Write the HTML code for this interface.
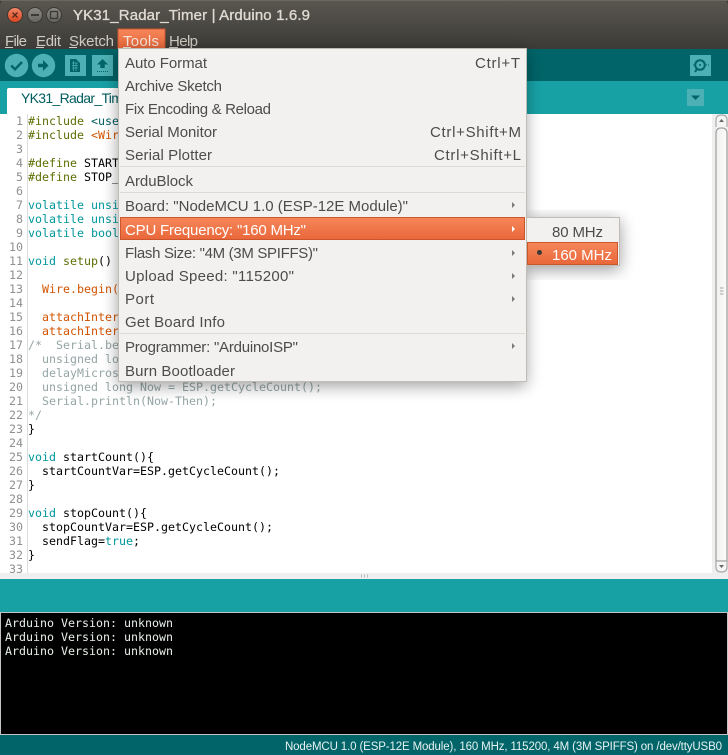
<!DOCTYPE html>
<html><head><meta charset="utf-8"><title>YK31_Radar_Timer | Arduino 1.6.9</title>
<style>
html,body{margin:0;padding:0;background:#3c3b37;width:728px;height:755px;overflow:hidden}
svg{display:block}
.c{font-family:"DejaVu Sans Mono","Liberation Mono",monospace;font-size:11.63px}
.n{fill:#8f8f8f;text-anchor:end}
.k{fill:#00979c}.o{fill:#5e6d03}.r{fill:#d35400}.g{fill:#95a5a6}.b{fill:#000}.t{fill:#005c5f}
.m{font-family:"Liberation Sans",sans-serif;font-size:15px;fill:#4c4c4c}
.w{fill:#fff}
.bar{font-family:"Liberation Sans",sans-serif;font-size:15px;fill:#cfcbc3}
</style></head><body>
<svg width="728" height="755" viewBox="0 0 728 755" xmlns="http://www.w3.org/2000/svg">
<defs>
<linearGradient id="tb" x1="0" y1="0" x2="0" y2="1"><stop offset="0" stop-color="#5a5750"/><stop offset=".45" stop-color="#4c4a44"/><stop offset="1" stop-color="#3c3b37"/></linearGradient>
<linearGradient id="hl" x1="0" y1="0" x2="0" y2="1"><stop offset="0" stop-color="#f5875a"/><stop offset="1" stop-color="#e9673a"/></linearGradient>
<linearGradient id="cl" x1="0" y1="0" x2="0" y2="1"><stop offset="0" stop-color="#f2896a"/><stop offset="1" stop-color="#d9431e"/></linearGradient>
<linearGradient id="btn" x1="0" y1="0" x2="0" y2="1"><stop offset="0" stop-color="#8d8b85"/><stop offset="1" stop-color="#65635d"/></linearGradient>
<linearGradient id="th" x1="0" y1="0" x2="1" y2="0"><stop offset="0" stop-color="#f2f1ef"/><stop offset="1" stop-color="#fbfbfa"/></linearGradient>
<filter id="sh" x="-20%" y="-20%" width="140%" height="140%"><feGaussianBlur stdDeviation="8"/></filter>
</defs>

<!-- window chrome -->
<rect width="728" height="755" fill="#3c3b37"/>
<path d="M0 49V6Q0 0 6 0H722Q728 0 728 6V49Z" fill="url(#tb)"/>
<rect y="0" width="728" height="1" fill="#6a675f"/>
<circle cx="15" cy="15" r="7.500" fill="url(#cl)" stroke="#3a3833"/>
<path d="M12.500 12.500l5 5M17.500 12.500l-5 5" stroke="#5a2a18" stroke-width="1.400"/>
<circle cx="35" cy="15" r="7.500" fill="url(#btn)" stroke="#3a3833"/>
<rect x="31" y="14" width="8" height="2" fill="#3c3b37"/>
<circle cx="54" cy="15" r="7.500" fill="url(#btn)" stroke="#3a3833"/>
<rect x="50.500" y="11.500" width="7" height="7" fill="none" stroke="#3c3b37" stroke-width="1.400"/>
<text x="73" y="20" font-family="'Liberation Sans',sans-serif" font-size="15" fill="#dfdbd2" stroke="#dfdbd2" stroke-width=".35" textLength="237" lengthAdjust="spacing">YK31_Radar_Timer | Arduino 1.6.9</text>

<!-- menu bar -->
<rect x="118" y="29" width="47" height="19.500" fill="url(#hl)" stroke="#c9562d"/>
<text class="bar" x="5" y="46" textLength="22">File</text>
<rect x="5" y="47" width="8" height="1" fill="#cfcbc3"/>
<text class="bar" x="36" y="46" textLength="25">Edit</text>
<rect x="36" y="47" width="8" height="1" fill="#cfcbc3"/>
<text class="bar" x="69" y="46" textLength="45">Sketch</text>
<rect x="69" y="47" width="8" height="1" fill="#cfcbc3"/>
<text class="bar" x="123" y="46" textLength="36" style="fill:#f8e6da">Tools</text>
<rect x="123" y="47" width="8" height="1" fill="#f8e6da"/>
<text class="bar" x="169" y="46" textLength="29">Help</text>
<rect x="169" y="47" width="9" height="1" fill="#cfcbc3"/>

<!-- toolbar -->
<rect y="49" width="728" height="32" fill="#006468"/>
<circle cx="16.500" cy="65.500" r="11.700" fill="#4db0b4"/>
<path d="M11.200 65.500l3.800 3.800 7-7.300" fill="none" stroke="#006468" stroke-width="2.400"/>
<circle cx="43.500" cy="65.500" r="11.700" fill="#4db0b4"/>
<path d="M38 63.800h5v-3.800l5.500 5.500-5.500 5.500v-3.800h-5z" fill="#006468"/>
<rect x="65" y="55" width="21" height="21" fill="#4db0b4"/>
<path d="M70 59h6l4 4v9H70z" fill="#006468"/>
<path d="M72 63h6M72 65.500h6M72 68h6M73.500 61v10M76 63v8" stroke="#4db0b4" stroke-width=".7"/>
<rect x="92" y="55" width="21" height="21" fill="#4db0b4"/>
<path d="M102.500 59l5.500 5.500h-3.300v3.500h-4.400v-3.500h-3.300z" fill="#006468"/>
<path d="M97 71.500h11" stroke="#006468" stroke-dasharray="1 1"/>
<rect x="690" y="55" width="21" height="21" fill="#4db0b4"/>
<circle cx="700" cy="65" r="4.800" fill="none" stroke="#006468" stroke-width="2"/>
<circle cx="700" cy="65" r="1" fill="#006468"/>
<path d="M697 69l-2 3" stroke="#006468" stroke-width="2"/>
<path d="M693 65h1.500M706 65h4" stroke="#006468" stroke-dasharray="1 1"/>

<!-- tab bar -->
<rect y="81" width="728" height="33" fill="#17a1a5"/>
<path d="M7 114V90Q7 88 9 88H150V114Z" fill="#fff"/>
<text x="21" y="103" font-family="'Liberation Sans',sans-serif" font-size="14" fill="#005c5f" textLength="113">YK31_Radar_Timer</text>
<rect x="687" y="89" width="17" height="17" fill="#4db0b4"/>
<path d="M691 95.500h9l-4.500 4.500z" fill="#006468"/>

<!-- editor -->
<rect y="114" width="728" height="459" fill="#fff"/>
<rect x="27" y="114" width="1" height="459" fill="#dcdcdc"/>
<g class="c" transform="translate(0,1)">
<text class="n" x="23" y="124">1</text><text class="n" x="23" y="138">2</text><text class="n" x="23" y="152">3</text><text class="n" x="23" y="166">4</text><text class="n" x="23" y="180">5</text><text class="n" x="23" y="194">6</text><text class="n" x="23" y="208">7</text><text class="n" x="23" y="222">8</text><text class="n" x="23" y="236">9</text><text class="n" x="23" y="250">10</text><text class="n" x="23" y="264">11</text><text class="n" x="23" y="278">12</text><text class="n" x="23" y="292">13</text><text class="n" x="23" y="306">14</text><text class="n" x="23" y="320">15</text><text class="n" x="23" y="334">16</text><text class="n" x="23" y="348">17</text><text class="n" x="23" y="362">18</text><text class="n" x="23" y="376">19</text><text class="n" x="23" y="390">20</text><text class="n" x="23" y="404">21</text><text class="n" x="23" y="418">22</text><text class="n" x="23" y="432">23</text><text class="n" x="23" y="446">24</text><text class="n" x="23" y="460">25</text><text class="n" x="23" y="474">26</text><text class="n" x="23" y="488">27</text><text class="n" x="23" y="502">28</text><text class="n" x="23" y="516">29</text><text class="n" x="23" y="530">30</text><text class="n" x="23" y="544">31</text><text class="n" x="23" y="558">32</text><text class="n" x="23" y="572">33</text>
<text class="o" x="28" y="124">#include</text><text class="t" x="91" y="124">&lt;user</text>
<text class="o" x="28" y="138">#include</text><text class="r" x="91" y="138">&lt;Wire</text>
<text class="o" x="28" y="166">#define</text><text class="b" x="84" y="166">START</text>
<text class="o" x="28" y="180">#define</text><text class="b" x="84" y="180">STOP_</text>
<text class="k" x="28" y="208">volatile unsi</text>
<text class="k" x="28" y="222">volatile unsi</text>
<text class="k" x="28" y="236">volatile bool</text>
<text x="28" y="264"><tspan class="k">void</tspan> <tspan class="o">setup</tspan><tspan class="b">()</tspan></text>
<text class="r" x="42" y="292">Wire.begin(</text>
<text class="r" x="42" y="320">attachInter</text>
<text class="r" x="42" y="334">attachInter</text>
<text class="g" x="28" y="348">/*</text><text class="g" x="56" y="348">Serial.be</text>
<text class="g" x="42" y="362">unsigned lo</text>
<text class="g" x="42" y="376">delayMicros</text>
<text class="g" x="42" y="390">unsigned long Now = ESP.getCycleCount();</text>
<text class="g" x="42" y="404">Serial.println(Now-Then);</text>
<text class="g" x="28" y="418">*/</text>
<text class="b" x="28" y="432">}</text>
<text x="28" y="460"><tspan class="k">void</tspan> <tspan class="b">startCount(){</tspan></text>
<text class="b" x="42" y="474">startCountVar=ESP.getCycleCount();</text>
<text class="b" x="28" y="488">}</text>
<text x="28" y="516"><tspan class="k">void</tspan> <tspan class="b">stopCount(){</tspan></text>
<text class="b" x="42" y="530">stopCountVar=ESP.getCycleCount();</text>
<text x="42" y="544"><tspan class="b">sendFlag=</tspan><tspan class="k">true</tspan><tspan class="b">;</tspan></text>
<text class="b" x="28" y="558">}</text>
</g>

<!-- vertical scrollbar -->
<rect x="712" y="114" width="16" height="459" fill="#efefef"/>
<path d="M716 127V120Q716 115 721.500 115Q727 115 727 120V127" fill="#f5f5f4" stroke="#a9a9a9" stroke-width="1.200"/>
<path d="M719 122h5l-2.500-3z" fill="#666"/>
<path d="M716 561V133Q716 128 721.500 128Q727 128 727 133V561Z" fill="url(#th)" stroke="#a5a5a5" stroke-width="1.300"/>
<path d="M720 288h3.500M720 291h3.500M720 294h3.500" stroke="#a5a5a5"/>
<path d="M716 561V567Q716 572 721.500 572Q727 572 727 567V561Z" fill="#f5f5f4" stroke="#a9a9a9" stroke-width="1.200"/>
<path d="M719 565h5l-2.500 3z" fill="#666"/>

<!-- horizontal split strip -->
<rect y="573" width="728" height="6" fill="#efefef"/>
<path d="M361.500 574.500v3M364.500 574.500v3M367.500 574.500v3" stroke="#bbb"/>

<!-- message area -->
<rect y="579" width="728" height="33" fill="#17a1a5"/>
<rect y="612" width="728" height="123" fill="#c4c4c4"/>
<rect x="1" y="613" width="726" height="121" fill="#000"/>
<g class="c" fill="#e8efe8">
<text x="5" y="627">Arduino Version: unknown</text>
<text x="5" y="641">Arduino Version: unknown</text>
<text x="5" y="655">Arduino Version: unknown</text>
</g>

<!-- status bar -->
<rect y="735" width="728" height="20" fill="#006468"/>
<text x="285" y="750" font-family="'Liberation Sans',sans-serif" font-size="11.500" fill="#e8f2f2" textLength="437">NodeMCU 1.0 (ESP-12E Module), 160 MHz, 115200, 4M (3M SPIFFS) on /dev/ttyUSB0</text>

<!-- Tools menu shadow -->
<rect x="118" y="52" width="408" height="334" fill="#000" opacity=".38" filter="url(#sh)"/>
<rect x="526" y="220" width="94" height="50" fill="#000" opacity=".38" filter="url(#sh)"/>

<!-- Tools menu -->
<rect x="118.500" y="48.500" width="408" height="333" fill="#f2f1ef" stroke="#bfbbb5"/>
<g class="m">
<text x="125" y="68" textLength="82">Auto Format</text>
<text x="475" y="68" textLength="45">Ctrl+T</text>
<text x="125" y="91" textLength="97">Archive Sketch</text>
<text x="125" y="114" textLength="146">Fix Encoding &amp; Reload</text>
<text x="125" y="137" textLength="92">Serial Monitor</text>
<text x="430" y="137" textLength="91">Ctrl+Shift+M</text>
<text x="125" y="160" textLength="87">Serial Plotter</text>
<text x="434" y="160" textLength="87">Ctrl+Shift+L</text>
<text x="125" y="186" textLength="68">ArduBlock</text>
<text x="125" y="211" textLength="283">Board: "NodeMCU 1.0 (ESP-12E Module)"</text>
<text x="125" y="258" textLength="193">Flash Size: "4M (3M SPIFFS)"</text>
<text x="125" y="281" textLength="169">Upload Speed: "115200"</text>
<text x="125" y="304" textLength="29">Port</text>
<text x="125" y="327" textLength="100">Get Board Info</text>
<text x="125" y="352" textLength="173">Programmer: "ArduinoISP"</text>
<text x="125" y="376" textLength="110">Burn Bootloader</text>
</g>
<rect x="120" y="166" width="405" height="1" fill="#dcdad5"/>
<rect x="120" y="192" width="405" height="1" fill="#dcdad5"/>
<rect x="120" y="333" width="405" height="1" fill="#dcdad5"/>
<rect x="120.500" y="217.500" width="404" height="22" fill="url(#hl)" stroke="#c9562d"/>
<text class="m w" x="125" y="235" textLength="181">CPU Frequency: "160 MHz"</text>
<g fill="#7a7a7a">
<path d="M512 202v6l3-3z"/><path d="M512 250v6l3-3z"/><path d="M512 273v6l3-3z"/><path d="M512 296v6l3-3z"/><path d="M512 343v6l3-3z"/>
</g>
<path d="M512 226v6l3-3z" fill="#fff"/>

<!-- submenu -->
<rect x="526.500" y="217.500" width="93" height="48" fill="#f2f1ef" stroke="#bfbbb5"/>
<text class="m" x="552" y="237" textLength="51">80 MHz</text>
<rect x="527.500" y="242.500" width="90" height="22" fill="url(#hl)" stroke="#c9562d"/>
<circle cx="539.500" cy="252.500" r="2.500" fill="#3c3b37"/>
<text class="m w" x="552" y="260" textLength="60">160 MHz</text>
</svg>
</body></html>
